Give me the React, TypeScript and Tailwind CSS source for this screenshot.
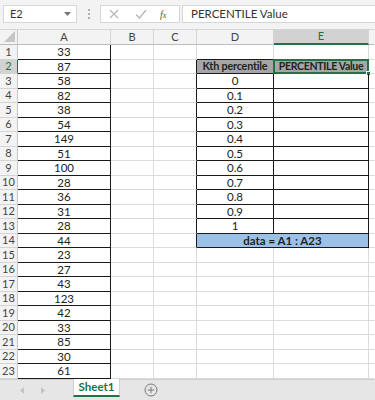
import React from "react";

const colW = [18, 93, 43, 43, 77, 95, 6];
const dataA = [33, 87, 58, 82, 38, 54, 149, 51, 100, 28, 36, 31, 28, 44, 23, 27, 43, 123, 42, 33, 85, 30, 61];
const kVals = ["0", "0.1", "0.2", "0.3", "0.4", "0.5", "0.6", "0.7", "0.8", "0.9", "1"];

const GRID = "#dadada";
const DARK = "#1a1a1a";

function Cell({
  w,
  h,
  children,
  className = "",
  right = GRID,
  bottom = GRID,
  bg,
}: {
  w: number;
  h: number;
  children?: React.ReactNode;
  className?: string;
  right?: string;
  bottom?: string;
  bg?: string;
}) {
  return (
    <div
      className={`box-border shrink-0 flex items-center justify-center border-r border-b whitespace-nowrap ${className}`}
      style={{ width: w, height: h, borderRightColor: right, borderBottomColor: bottom, background: bg }}
    >
      {children}
    </div>
  );
}

export default function App() {
  const rows = dataA.map((v, i) => {
    const r = i + 1;
    const h = r % 2 === 1 ? 15 : 14;
    const inTable = r >= 2 && r <= 14;
    const rowSel = r === 2;
    let d: React.ReactNode = null;
    let e: React.ReactNode = null;
    let dCls = "";
    let eCls = "";
    let dBg: string | undefined;
    let eBg: string | undefined;
    let dRight = GRID,
      dBottom = GRID,
      eRight = GRID,
      eBottom = GRID;
    if (r === 1) {
      dBottom = DARK;
      eBottom = DARK;
    }
    if (r === 2) {
      d = "Kth percentile";
      e = "PERCENTILE Value";
      dCls = "font-bold text-[10.8px] tracking-[-0.2px]";
      eCls = "font-bold text-[10.5px] tracking-[-0.3px]";
      dBg = "#a6a6a6";
      eBg = "#a6a6a6";
    }
    if (r >= 3 && r <= 13) {
      d = kVals[r - 3];
    }
    if (inTable) {
      dRight = DARK;
      dBottom = DARK;
      eRight = DARK;
      eBottom = DARK;
    }
    const cRight = inTable ? DARK : GRID;
    return (
      <div key={r} className="flex">
        <Cell
          w={colW[0]}
          h={h}
          className="text-[11px] text-[#444] justify-center"
          right={rowSel ? "#217346" : "#c8c8c8"}
          bottom="#d4d4d4"
          bg={rowSel ? "#d2d2d2" : "#f3f3f3"}
        >
          <span className={rowSel ? "text-[#217346]" : ""}>{r}</span>
        </Cell>
        <Cell w={colW[1]} h={h} right={DARK} bottom={DARK}>
          {v}
        </Cell>
        <Cell w={colW[2]} h={h} />
        <Cell w={colW[3]} h={h} right={cRight} />
        {r === 14 ? (
          <Cell w={colW[4] + colW[5]} h={h} right={DARK} bottom={DARK} bg="#9bc2e6" className="font-bold text-[11.5px]">
            data = A1 : A23
          </Cell>
        ) : (
          <>
            <Cell w={colW[4]} h={h} right={dRight} bottom={dBottom} bg={dBg} className={dCls}>
              {d}
            </Cell>
            <Cell w={colW[5]} h={h} right={eRight} bottom={eBottom} bg={eBg} className={`${eCls} relative`}>
              {e}
              {r === 2 && (
                <>
                  <div className="absolute -left-px -top-px -right-px -bottom-px border-2 border-[#217346] pointer-events-none" />
                  <div className="absolute -right-[3px] -bottom-[3px] w-[5px] h-[5px] bg-[#217346] border border-white" />
                </>
              )}
            </Cell>
          </>
        )}
        <Cell w={colW[6]} h={h} right="transparent" />
      </div>
    );
  });

  return (
    <div
      className="w-[375px] h-[400px] overflow-hidden bg-white text-[11.5px] text-[#222] relative"
      style={{ fontFamily: "Lato, 'Open Sans', sans-serif" }}
    >
      {/* formula bar */}
      <div className="h-[30px] bg-[#f3f3f3] flex items-start pt-[5px] border-b border-[#d4d4d4] box-border">
        <div className="ml-[3px] w-[74px] h-[18px] bg-white border border-[#d6d6d6] box-border flex items-center justify-between pl-[6px] pr-[5px] text-[11px] text-[#333]">
          <span>E2</span>
          <svg width="7" height="4" viewBox="0 0 7 4">
            <path d="M0 0 L7 0 L3.5 4 Z" fill="#777" />
          </svg>
        </div>
        <div className="w-[23px] h-[18px] flex flex-col items-center justify-center gap-[2px]">
          <div className="w-[2px] h-[2px] bg-[#b0b0b0]" />
          <div className="w-[2px] h-[2px] bg-[#b0b0b0]" />
          <div className="w-[2px] h-[2px] bg-[#b0b0b0]" />
        </div>
        <div className="w-[80px] h-[18px] bg-white border border-[#d6d6d6] box-border flex items-center">
          <svg width="10" height="10" viewBox="0 0 10 10" className="ml-[8px]">
            <path d="M1 1 L9 9 M9 1 L1 9" stroke="#b4b4b4" strokeWidth="1.1" />
          </svg>
          <svg width="12" height="10" viewBox="0 0 12 10" className="ml-[16px]">
            <path d="M1 5.5 L4.5 9 L11 1" stroke="#b4b4b4" strokeWidth="1.2" fill="none" />
          </svg>
          <span className="ml-[13px] italic text-[10px] text-[#555]" style={{ fontFamily: "'Liberation Serif', serif" }}>
            f<span className="text-[8px]">x</span>
          </span>
        </div>
        <div className="ml-[2px] flex-1 h-[18px] bg-white border border-[#d6d6d6] border-r-0 box-border flex items-center pl-[8px] text-[11.5px] text-[#333]">
          PERCENTILE Value
        </div>
      </div>
      {/* header row */}
      <div className="flex">
        <Cell w={colW[0]} h={15} right="#c8c8c8" bottom="#bdbdbd" bg="#f3f3f3" className="relative">
          <svg width="11" height="11" viewBox="0 0 11 11" className="absolute right-[2px] bottom-[2px]">
            <path d="M11 0 L11 11 L0 11 Z" fill="#c6c6c6" />
          </svg>
        </Cell>
        {["A", "B", "C", "D", "E", ""].map((c, i) => (
          <Cell
            key={i}
            w={colW[i + 1]}
            h={15}
            right={i === 5 ? "transparent" : "#d4d4d4"}
            bottom={c === "E" ? "#217346" : "#bdbdbd"}
            bg={c === "E" ? "#d2d2d2" : "#f3f3f3"}
            className={`text-[11px] ${c === "E" ? "text-[#217346] border-b-2" : "text-[#444]"}`}
          >
            {c}
          </Cell>
        ))}
      </div>
      {rows}
      {/* sheet tabs */}
      <div className="absolute left-0 right-0 bottom-0 h-[21px] bg-[#e6e6e6] border-t border-[#cfcfcf] flex items-start">
        <div className="w-[73px] h-[20px] flex items-center">
          <svg width="5" height="7" viewBox="0 0 5 7" className="ml-[20px]">
            <path d="M4 0 L0 3.5 L4 7 Z" fill="#c4c4c4" />
          </svg>
          <svg width="5" height="7" viewBox="0 0 5 7" className="ml-[15px]">
            <path d="M1 0 L5 3.5 L1 7 Z" fill="#c4c4c4" />
          </svg>
        </div>
        <div className="w-[47px] h-[18px] -mt-px bg-white border-l border-r border-[#cfcfcf] border-b-2 border-b-[#217346] box-border flex items-center justify-center font-bold text-[11.5px] text-[#217346]">
          Sheet1
        </div>
        <div className="ml-[24px] h-[20px] flex items-center">
          <svg width="14" height="14" viewBox="0 0 14 14">
            <circle cx="7" cy="7" r="6" stroke="#7a7a7a" strokeWidth="1" fill="none" />
            <path d="M7 3.8 V10.2 M3.8 7 H10.2" stroke="#7a7a7a" strokeWidth="1" />
          </svg>
        </div>
      </div>
    </div>
  );
}
